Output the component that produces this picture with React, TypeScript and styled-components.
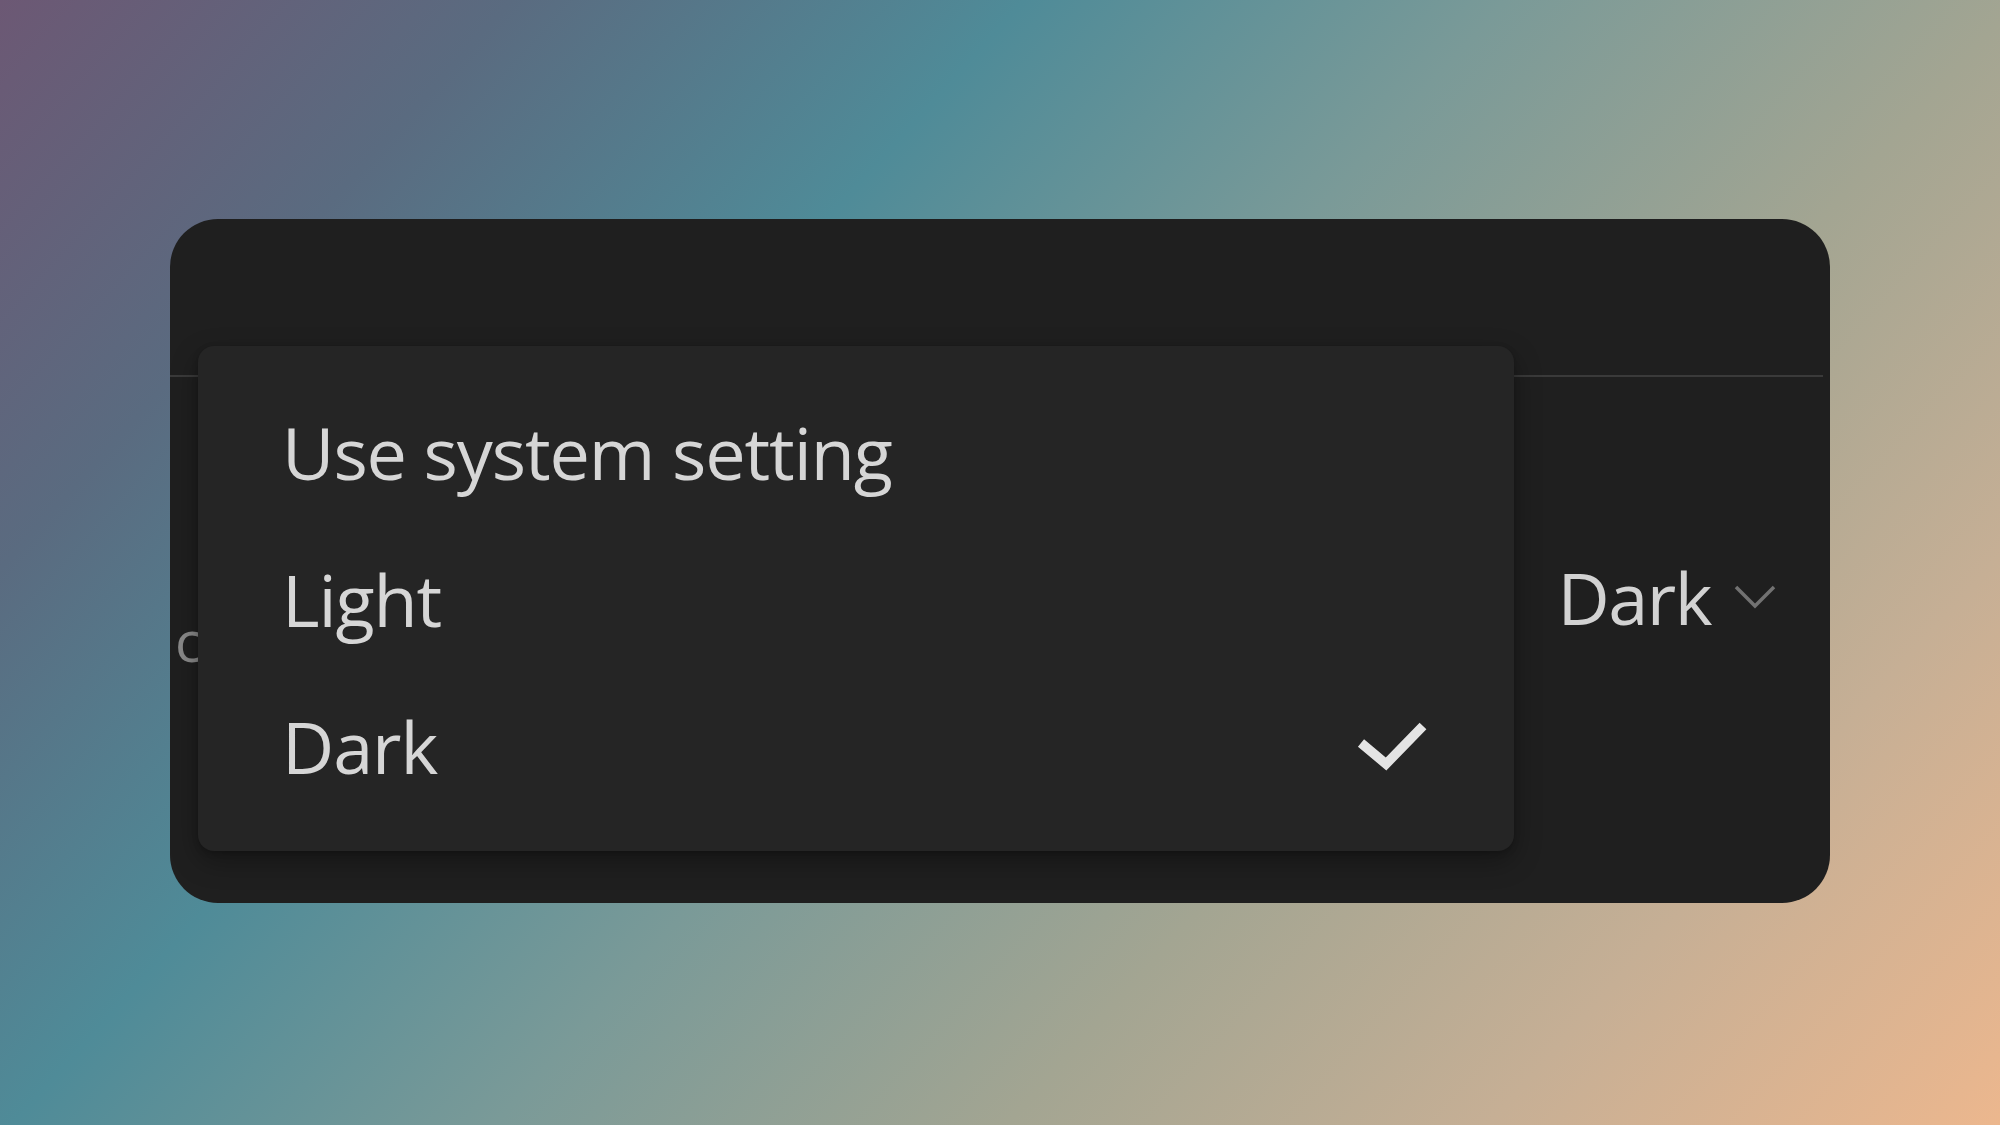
import styled, { createGlobalStyle } from "styled-components";

const GlobalStyle = createGlobalStyle`
  html, body {
    margin: 0;
    padding: 0;
  }

  body {
    font-family: "Open Sans", "Noto Sans", "Liberation Sans", sans-serif;
    -webkit-font-smoothing: antialiased;
  }
`;

type ThemeOption = "system" | "light" | "dark";

const themeOptions: { value: ThemeOption; label: string }[] = [
  { value: "system", label: "Use system setting" },
  { value: "light", label: "Light" },
  { value: "dark", label: "Dark" },
];

const Page = styled.div`
  box-sizing: border-box;
  width: 2000px;
  height: 1125px;
  padding: 219px 0 0 170px;
  background: linear-gradient(
    132deg,
    #6c5874 0%,
    #5a6b80 17%,
    #4f8b98 34%,
    #7a9a98 50%,
    #a3a592 67%,
    #c6af95 83%,
    #ecb78e 100%
  );
  overflow: hidden;
`;

const Card = styled.section`
  position: relative;
  display: flex;
  flex-direction: column;
  width: 1660px;
  height: 684px;
  border-radius: 48px;
  background: #1f1f1f;
  overflow: hidden;
`;

const Header = styled.header`
  flex: none;
  height: 156px;
  margin-right: 7px;
  border-bottom: 2px solid #3a3a3a;
`;

const SettingRow = styled.div`
  display: flex;
  justify-content: space-between;
  align-items: flex-start;
  padding: 0 53px 0 5px;
`;

// only the first letter peeks out from under the open menu
const Description = styled.p`
  margin: 235px 0 0;
  font-size: 56px;
  line-height: 1;
  color: #8a8a8a;
  white-space: nowrap;
`;

const SelectButton = styled.button`
  display: flex;
  align-items: center;
  gap: 22px;
  margin-top: 184px;
  padding: 0;
  border: none;
  background: transparent;
  font-family: inherit;
  font-size: 72px;
  letter-spacing: -1.5px;
  line-height: 1;
  color: #d2d2d2;
  cursor: pointer;
`;

const Menu = styled.ul`
  position: absolute;
  top: 127px;
  left: 28px;
  box-sizing: border-box;
  width: 1316px;
  margin: 0;
  padding: 32px 0;
  list-style: none;
  border-radius: 16px;
  background: #252525;
  box-shadow: 0 10px 28px rgba(0, 0, 0, 0.32), 0 2px 6px rgba(0, 0, 0, 0.2);
`;

const MenuItem = styled.li<{ $selected?: boolean }>`
  display: flex;
  align-items: center;
  justify-content: space-between;
  height: 147px;
  padding: 0 86px 0 84px;
  font-size: 72px;
  letter-spacing: -1.1px;
  line-height: 1;
  color: #d6d6d6;
  cursor: default;
`;

function CheckIcon() {
  return (
    <svg width="72" height="50" viewBox="0 0 72 50" fill="none">
      <polyline
        points="5,22 30,43 67,5"
        stroke="#e4e4e4"
        strokeWidth="9.5"
        strokeLinejoin="miter"
      />
    </svg>
  );
}

function ChevronDown() {
  return (
    <svg width="44" height="26" viewBox="0 0 44 26" fill="none">
      <polyline
        points="3,3 22,22 41,3"
        stroke="#727272"
        strokeWidth="3.5"
      />
    </svg>
  );
}

export default function App() {
  const current: ThemeOption = "dark";

  return (
    <>
      <GlobalStyle />
      <Page>
        <Card>
          <Header />
          <SettingRow>
            <Description>c</Description>
            <SelectButton>
              Dark
              <ChevronDown />
            </SelectButton>
          </SettingRow>
          <Menu role="listbox">
            {themeOptions.map((option) => (
              <MenuItem
                key={option.value}
                role="option"
                $selected={option.value === current}
              >
                {option.label}
                {option.value === current && <CheckIcon />}
              </MenuItem>
            ))}
          </Menu>
        </Card>
      </Page>
    </>
  );
}
